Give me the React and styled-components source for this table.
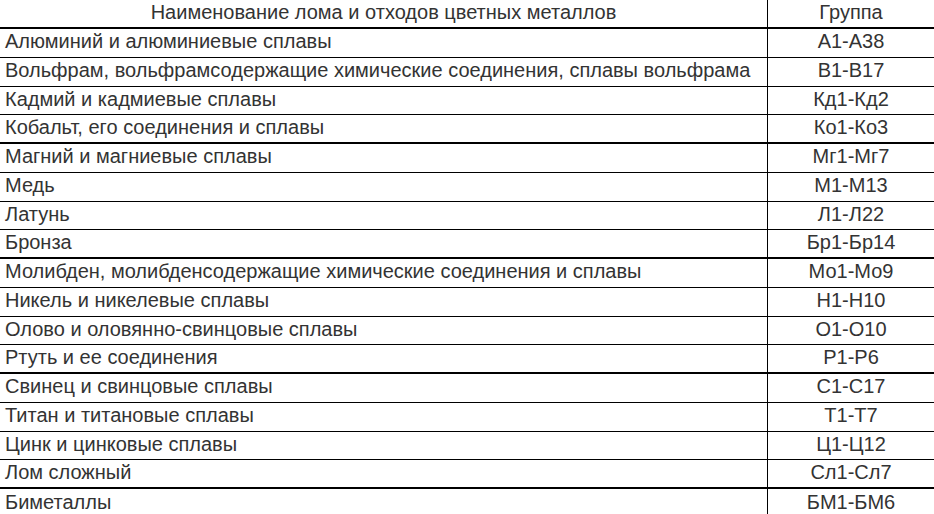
import React from 'react';
import styled, { createGlobalStyle } from 'styled-components';

const GlobalStyle = createGlobalStyle`
  html, body {
    margin: 0;
    padding: 0;
    background: #fff;
  }
  body {
    font-family: 'Liberation Sans', Arial, sans-serif;
    overflow: hidden;
  }
`;

// Rows of the scrap table: name + group code.
// "thick" marks the rows whose bottom line renders heavier in the original.
const rows = [
  { name: 'Алюминий и алюминиевые сплавы', code: 'А1-А38' },
  { name: 'Вольфрам, вольфрамсодержащие химические соединения, сплавы вольфрама', code: 'В1-В17' },
  { name: 'Кадмий и кадмиевые сплавы', code: 'Кд1-Кд2' },
  { name: 'Кобальт, его соединения и сплавы', code: 'Ко1-Ко3', thick: true },
  { name: 'Магний и магниевые сплавы', code: 'Мг1-Мг7' },
  { name: 'Медь', code: 'М1-М13' },
  { name: 'Латунь', code: 'Л1-Л22' },
  { name: 'Бронза', code: 'Бр1-Бр14', thick: true },
  { name: 'Молибден, молибденсодержащие химические соединения и сплавы', code: 'Мо1-Мо9' },
  { name: 'Никель и никелевые сплавы', code: 'Н1-Н10' },
  { name: 'Олово и оловянно-свинцовые сплавы', code: 'О1-О10' },
  { name: 'Ртуть и ее соединения', code: 'Р1-Р6', thick: true },
  { name: 'Свинец и свинцовые сплавы', code: 'С1-С17' },
  { name: 'Титан и титановые сплавы', code: 'Т1-Т7' },
  { name: 'Цинк и цинковые сплавы', code: 'Ц1-Ц12' },
  { name: 'Лом сложный', code: 'Сл1-Сл7', thick: true },
  { name: 'Биметаллы', code: 'БМ1-БМ6', last: true },
];

function App() {
  return (
    <>
      <GlobalStyle />
      <Table>
        <HeaderRow>
          <NameCell $center>Наименование лома и отходов цветных металлов</NameCell>
          <CodeCell>Группа</CodeCell>
        </HeaderRow>
        {rows.map((r) => (
          <Row key={r.code} $thick={r.thick} $last={r.last}>
            <NameCell>{r.name}</NameCell>
            <CodeCell>{r.code}</CodeCell>
          </Row>
        ))}
      </Table>
    </>
  );
}

const Table = styled.div`
  width: 934px;
  height: 514px;
  overflow: hidden;
  color: #333;
  font-size: 20px;
`;

const Row = styled.div`
  display: grid;
  grid-template-columns: 768px 1fr;
  box-sizing: border-box;
  height: 28.75px;
  border-bottom: ${(p) => (p.$last ? 'none' : p.$thick ? '2px solid #000' : '1px solid #000')};
`;

const HeaderRow = styled(Row)`
  height: 29px;
  border-bottom: 2px solid #000;
`;

const NameCell = styled.div`
  display: flex;
  align-items: center;
  justify-content: ${(p) => (p.$center ? 'center' : 'flex-start')};
  box-sizing: border-box;
  padding: 0 0 3px ${(p) => (p.$center ? '0' : '5px')};
  border-right: 1px solid #000;
  white-space: nowrap;
  line-height: 1;
`;

const CodeCell = styled.div`
  display: flex;
  align-items: center;
  justify-content: center;
  box-sizing: border-box;
  padding-bottom: 3px;
  white-space: nowrap;
  line-height: 1;
`;

export default App;
